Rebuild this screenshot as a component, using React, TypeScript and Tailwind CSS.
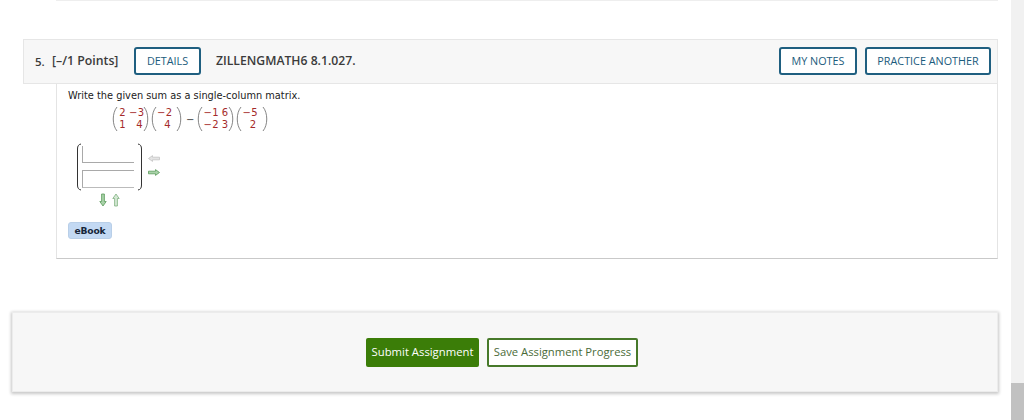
const sans = "font-['Open_Sans',sans-serif]";
const verdana = "font-['DejaVu_Sans',sans-serif]";

function OutlineButton({ label, width }: { label: string; width: string }) {
  return (
    <button
      className={`flex h-[28px] ${width} items-center justify-center rounded-[3px] border-2 border-[#1f5f80] bg-white pt-px text-[10.8px] text-[#1b5b7c] ${sans}`}
    >
      {label}
    </button>
  );
}

function Paren({ right }: { right?: boolean }) {
  return (
    <svg width="7" height="26" viewBox="0 0 7 26" className="shrink-0">
      <path
        d={right ? "M1 1 C6 7 6 19 1 25" : "M6 1 C1 7 1 19 6 25"}
        fill="none"
        stroke="#666"
        strokeWidth="0.8"
      />
    </svg>
  );
}

// the tall bracket round the answer boxes, nearly straight with bent ends
function Bracket({ right }: { right?: boolean }) {
  return (
    <svg width="7" height="48" viewBox="0 0 7 48" className="shrink-0">
      <path
        d={right ? "M1 1 C3.5 1.5 4.5 3 4.5 6 V42 C4.5 45 3.5 46.5 1 47" : "M6 1 C3.5 1.5 2.5 3 2.5 6 V42 C2.5 45 3.5 46.5 6 47"}
        fill="none"
        stroke="#333"
        strokeWidth="1"
      />
    </svg>
  );
}

// rows are right aligned cells in red, like the MathML output of the homework site
function Matrix({ rows, cols }: { rows: string[][]; cols: string }) {
  return (
    <span className="flex items-center">
      <Paren />
      <span className={`grid ${cols} gap-x-[3px] text-right text-[10px] leading-[12px] tracking-[0.4px] text-[#a52a2a]`}>
        {rows.flat().map((cell, i) => (
          <span key={i}>{cell}</span>
        ))}
      </span>
      <Paren right />
    </span>
  );
}

function ArrowH({ dir, color, fill }: { dir: "left" | "right"; color: string; fill: string }) {
  return (
    <svg width="12" height="7" viewBox="0 0 12 7">
      <path
        d={dir === "right" ? "M0.5 2.2H7.5V0.6L11.5 3.5L7.5 6.4V4.8H0.5Z" : "M11.5 2.2H4.5V0.6L0.5 3.5L4.5 6.4V4.8H11.5Z"}
        fill={fill}
        stroke={color}
        strokeWidth="0.8"
      />
    </svg>
  );
}

function ArrowV({ dir, color, fill }: { dir: "up" | "down"; color: string; fill: string }) {
  return (
    <svg width="8" height="14" viewBox="0 0 8 14">
      <path
        d={dir === "down" ? "M2.6 1V8.5H0.8L4 13L7.2 8.5H5.4V1Z" : "M2.6 13V5.5H0.8L4 1L7.2 5.5H5.4V13Z"}
        fill={fill}
        stroke={color}
        strokeWidth="0.8"
      />
    </svg>
  );
}

export default function App() {
  return (
    <div className="flex h-[420px] w-[1024px] overflow-hidden bg-white">
      <main className="w-[1011px] shrink-0">
        {/* end of the previous question */}
        <div className="ml-[56px] h-px w-[942px] bg-[#eeeeee]" />

        <section className="ml-[23px] mt-[38px] w-[975px]">
          <header className="flex h-[45px] items-center border border-[#e6e6e6] bg-[#f7f7f7] pb-px pl-[11px] pr-[6px] text-[#3b3b3b]">
            <b className={`w-[17px] pt-px text-[11.5px] font-semibold ${sans}`}>5.</b>
            <b className={`w-[82px] pt-px text-[12.3px] font-semibold ${sans}`}>[–/1 Points]</b>
            <OutlineButton label="DETAILS" width="w-[67px]" />
            <b className={`ml-[15px] pt-px text-[12.2px] font-semibold ${sans}`}>ZILLENGMATH6 8.1.027.</b>
            <div className="ml-auto flex gap-[8px]">
              <OutlineButton label="MY NOTES" width="w-[78px]" />
              <OutlineButton label="PRACTICE ANOTHER" width="w-[126px]" />
            </div>
          </header>

          <div className={`ml-[33px] h-[175px] border-x border-b border-x-[#e4e4e4] border-b-[#c9c9c9] pl-[11px] pt-[5px] ${verdana}`}>
            <p className="text-[9.8px] leading-[13px] text-[#222]">
              Write the given sum as a single-column matrix.
            </p>

            <div className="ml-[43px] mt-[2px] flex h-[30px] items-center">
              <Matrix rows={[["2", "−3"], ["1", "4"]]} cols="grid-cols-[8px_14px]" />
              <Matrix rows={[["−2"], ["4"]]} cols="grid-cols-[14px] pr-[5px]" />
              <span className="ml-[3px] mr-[2px] text-[10px] text-[#444]">−</span>
              <Matrix rows={[["−1", "6"], ["−2", "3"]]} cols="grid-cols-[14px_8px]" />
              <Matrix rows={[["−5"], ["2"]]} cols="grid-cols-[14px] pr-[6px]" />
            </div>

            <div className="ml-[7px] mt-[9px] flex items-center">
              <Bracket />
              <div className="mr-[3px] flex flex-col gap-[7px]">
                <div className="h-[17px] w-[52px] border-b border-l border-[#a9a9a9]" />
                <div className="h-[18px] w-[52px] border-b border-l border-t border-[#a9a9a9] border-b-[#bbbbbb]" />
              </div>
              <Bracket right />
              <div className="mb-[4px] ml-[4px] flex flex-col gap-[7px]">
                <ArrowH dir="left" color="#c4c4c4" fill="#e4e4e4" />
                <ArrowH dir="right" color="#5b9a5b" fill="#a9d2a9" />
              </div>
            </div>

            <div className="ml-[31px] mt-[2px] flex gap-[5px]">
              <ArrowV dir="down" color="#5b9a5b" fill="#a9d2a9" />
              <ArrowV dir="up" color="#7fb07f" fill="#d5e8d5" />
            </div>

            <button className="mt-[15px] flex h-[17px] w-[44px] items-center justify-center rounded-[3px] border border-[#b9cfe8] bg-[#c3d9f3] text-[9.2px] font-bold tracking-[-0.2px] text-[#16263a]">
              eBook
            </button>
          </div>
        </section>

        <section className="ml-[12px] mt-[53px] flex h-[80px] w-[986px] items-center justify-center gap-[8px] border border-[#ececec] bg-[#f7f7f7] pr-[6px] shadow-[0_1px_3px_1px_rgba(0,0,0,0.22)]">
          <button className={`flex h-[29px] w-[113px] items-center justify-center rounded-[2px] bg-[#3b7d08] text-[11.3px] text-white ${sans}`}>
            Submit Assignment
          </button>
          <button className={`flex h-[29px] w-[151px] items-center justify-center rounded-[2px] border-2 border-[#47792a] bg-white text-[11.25px] text-[#4a6b38] ${sans}`}>
            Save Assignment Progress
          </button>
        </section>
      </main>

      {/* page scrollbar */}
      <aside className="flex w-[13px] flex-col bg-[#f1f1f1]">
        <div className="flex-1" />
        <div className="h-[37px] bg-[#c1c1c1]" />
      </aside>
    </div>
  );
}
